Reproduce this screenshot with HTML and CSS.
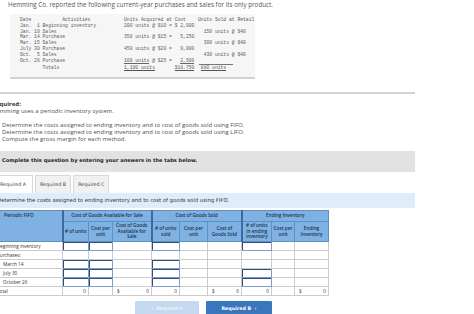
FILE: index.html
```html
<!DOCTYPE html>
<html lang="en">
<head>
  <meta charset="UTF-8">
  <meta name="viewport" content="width=device-width, initial-scale=1.0">
  <title>Hemming Co. - Periodic FIFO</title>
  <link rel="stylesheet" href="styles.css">
</head>
<body>
  <p class="intro">Hemming Co. reported the following current-year purchases and sales for its only product.</p>

  <!-- datos del problema -->
  <div class="data">
    <div class="drow"><span class="c1">Date           Activities</span><span class="c2">Units Acquired at Cost</span><span class="c3">Units Sold at Retail</span></div>
    <div class="drow"><span class="c1">Jan.  1 Beginning inventory</span><span class="c2">200 units @ $10 = $ 2,000</span><span class="c3"></span></div>
    <div class="drow"><span class="c1">Jan. 10 Sales</span><span class="c2"></span><span class="c3">  150 units @ $40</span></div>
    <div class="drow"><span class="c1">Mar. 14 Purchase</span><span class="c2">350 units @ $15 =   5,250</span><span class="c3"></span></div>
    <div class="drow"><span class="c1">Mar. 15 Sales</span><span class="c2"></span><span class="c3">  300 units @ $40</span></div>
    <div class="drow"><span class="c1">July 30 Purchase</span><span class="c2">450 units @ $20 =   9,000</span><span class="c3"></span></div>
    <div class="drow"><span class="c1">Oct.  5 Sales</span><span class="c2"></span><span class="c3">  430 units @ $40</span></div>
    <div class="drow"><span class="c1">Oct. 26 Purchase</span><span class="c2"><u>100 units</u> @ $25 =   <u>2,500</u></span><span class="c3 rule"></span></div>
    <div class="drow total"><span class="c1">        Totals</span><span class="c2"><u class="dbl">1,100 units</u>       <u class="dbl">$18,750</u></span><span class="c3"> <u class="dbl">880 units</u></span></div>
  </div>

  <div class="task">
    <hr class="sep">

    <div class="required">
      <p class="req-title">Required:</p>
      <p>Hemming uses a periodic inventory system.</p>
      <p class="item"><span class="mark">(a)</span>Determine the costs assigned to ending inventory and to cost of goods sold using FIFO.</p>
      <p class="item"><span class="mark">(b)</span>Determine the costs assigned to ending inventory and to cost of goods sold using LIFO.</p>
      <p class="item"><span class="mark">(c)</span>Compute the gross margin for each method.</p>
    </div>

    <div class="notice">Complete this question by entering your answers in the tabs below.</div>

    <div class="tabs">
      <div class="tab active">Required A</div>
      <div class="tab">Required B</div>
      <div class="tab">Required C</div>
    </div>

    <div class="prompt">Determine the costs assigned to ending inventory and to cost of goods sold using FIFO.</div>

    <table class="fifo">
      <colgroup>
        <col style="width:70px"><col style="width:26px"><col style="width:24px"><col style="width:39px">
        <col style="width:28px"><col style="width:28px"><col style="width:34px">
        <col style="width:30px"><col style="width:23px"><col style="width:34px">
      </colgroup>
      <thead>
        <tr class="h1">
          <th class="first" rowspan="2">Periodic FIFO</th>
          <th colspan="3" class="grp">Cost of Goods Available for Sale</th>
          <th colspan="3" class="grp">Cost of Goods Sold</th>
          <th colspan="3" class="grp">Ending Inventory</th>
        </tr>
        <tr class="h2">
          <th class="grp"># of units</th><th>Cost per unit</th><th>Cost of Goods Available for Sale</th>
          <th class="grp"># of units sold</th><th>Cost per unit</th><th>Cost of Goods Sold</th>
          <th class="grp"># of units in ending inventory</th><th>Cost per unit</th><th>Ending Inventory</th>
        </tr>
      </thead>
      <tbody>
        <tr>
          <td class="label">Beginning inventory</td>
          <td class="in"></td><td class="in"></td><td></td>
          <td class="in"></td><td></td><td></td>
          <td class="in"></td><td></td><td></td>
        </tr>
        <tr>
          <td class="label">Purchases:</td>
          <td></td><td></td><td></td>
          <td></td><td></td><td></td>
          <td class="soft"></td><td></td><td></td>
        </tr>
        <tr>
          <td class="label sub">March 14</td>
          <td class="in"></td><td class="in"></td><td></td>
          <td class="in"></td><td></td><td></td>
          <td class="soft"></td><td></td><td></td>
        </tr>
        <tr>
          <td class="label sub">July 30</td>
          <td class="in"></td><td class="in"></td><td></td>
          <td class="in"></td><td></td><td></td>
          <td class="in"></td><td></td><td></td>
        </tr>
        <tr>
          <td class="label sub">October 26</td>
          <td class="in"></td><td class="in"></td><td></td>
          <td class="in"></td><td></td><td></td>
          <td class="in"></td><td></td><td></td>
        </tr>
        <tr class="sum">
          <td class="label">Total</td>
          <td class="num">0</td><td></td><td class="num"><span class="cur">$</span>0</td>
          <td class="num">0</td><td></td><td class="num"><span class="cur">$</span>0</td>
          <td class="num">0</td><td></td><td class="num"><span class="cur">$</span>0</td>
        </tr>
      </tbody>
    </table>

    <div class="nav">
      <button class="btn prev" disabled>&lsaquo;&nbsp; Required A</button>
      <button class="btn next">Required B &nbsp;&rsaquo;</button>
    </div>
  </div>
</body>
</html>
```

FILE: styles.css
```css
/* General */
body {
  margin: 0;
  width: 474px;
  height: 314px;
  overflow: hidden;
  background-color: #fff;
  font-family: "Open Sans", Arial, sans-serif;
  color: #555;
}

p {
  margin: 0;
}

.intro {
  margin: 1px 0 0 8px;
  font-size: 6.3px;
  line-height: 8px;
}

/* Problem data */
.data {
  margin: 5px 0 0 10px;
  width: 245px;
  padding: 3px 0 6px 0;
  box-sizing: border-box;
  background-color: #f6f6f6;
  border-bottom: 2px solid #d2d2d2;
  font-family: "Liberation Mono", "DejaVu Sans Mono", monospace;
  font-size: 4.7px;
  line-height: 5.8px;
  color: #5a5a5a;
}

.drow {
  display: flex;
  white-space: pre;
  height: 5.8px;
}

.drow.total {
  margin-top: 2px;
}

.c1 {
  width: 104px;
  padding-left: 10px;
}

.c2 {
  width: 73px;
}

.c3 {
  width: 56px;
  padding-left: 1px;
}

.c3.rule {
  border-bottom: 0.6px solid #777;
  height: 6px;
  margin-left: 2px;
  width: 33px;
}

.data u {
  text-decoration: none;
  border-bottom: 0.6px solid #666;
}

.data u.dbl {
  border-bottom: 1.6px double #555;
}

/* Task section */
.task {
  margin-left: -8px;
  width: 423px;
}

.sep {
  margin: 13px 0 0 0;
  border: none;
  border-top: 2px solid #cfd5d9;
  height: 0;
}

.required {
  margin-top: 7px;
  font-size: 6px;
  line-height: 7px;
  color: #505050;
}

.req-title {
  font-weight: bold;
  color: #333;
}

.required p:nth-child(3) {
  margin-top: 7px;
}

.mark {
  display: inline-block;
  width: 10px;
}

.notice {
  margin-top: 8px;
  padding: 6px 10px 9px;
  background-color: #e2e2e2;
  font-family: "DejaVu Sans", Verdana, sans-serif;
  font-weight: bold;
  font-size: 5.1px;
  line-height: 6px;
  color: #222;
}

/* Tabs */
.tabs {
  display: flex;
  gap: 2px;
  margin-top: 3px;
  height: 18px;
}

.tab {
  padding: 0 4px;
  border: 1px solid #d8d8d8;
  border-bottom: none;
  background-color: #f1f1f1;
  font-family: "DejaVu Sans", Verdana, sans-serif;
  font-size: 4.8px;
  line-height: 17px;
  color: #444;
}

.tab.active {
  padding-left: 7px;
  background-color: #fff;
  width: 28px;
}

.prompt {
  padding: 4px 5px 5px;
  background-color: #deedf9;
  font-family: "DejaVu Sans", Verdana, sans-serif;
  font-size: 5.3px;
  line-height: 6px;
  color: #333;
}

/* Answer table */
.fifo {
  margin-top: 2px;
  width: 336px;
  table-layout: fixed;
  border-collapse: collapse;
  font-family: "Open Sans", Arial, sans-serif;
  font-size: 4.7px;
}

.fifo th {
  background-color: #7fb2e3;
  color: #1a2f4d;
  font-weight: 600;
  border: 1px solid #5e90c6;
  line-height: 5.6px;
  padding: 0 1px;
  text-align: center;
}

.fifo .h1 th {
  height: 10px;
}

.fifo .h2 th {
  height: 19px;
}

.fifo th.first {
  text-align: left;
  vertical-align: top;
  padding: 2px 0 0 11px;
}

.fifo .grp {
  border-left: 2px solid #3b6aa3;
}

.fifo td {
  height: 8px;
  border: 1px solid #cbcbcb;
  padding: 0 2px;
  color: #333;
}

.fifo td.label {
  padding-left: 4px;
  white-space: nowrap;
}

.fifo td.sub {
  padding-left: 10px;
}

.fifo td.in {
  border: 1px solid #7d9ccc;
  box-shadow: inset 1px 1px 0 #2f4d75;
}

.fifo td.soft {
  border-top: 1px dashed #9fc1e6;
}

.fifo td.num {
  text-align: right;
}

.cur {
  float: left;
  padding-left: 2px;
}

/* Buttons */
.nav {
  display: flex;
  justify-content: center;
  gap: 7px;
  margin-top: 5px;
}

.btn {
  height: 15px;
  border: none;
  border-radius: 1px;
  font-family: "DejaVu Sans", Verdana, sans-serif;
  font-size: 4.8px;
  color: #fff;
  padding: 0;
}

.btn.prev {
  width: 64px;
  background-color: #c4d8ef;
}

.btn.next {
  width: 66px;
  background-color: #3a76be;
  font-weight: bold;
}
```
